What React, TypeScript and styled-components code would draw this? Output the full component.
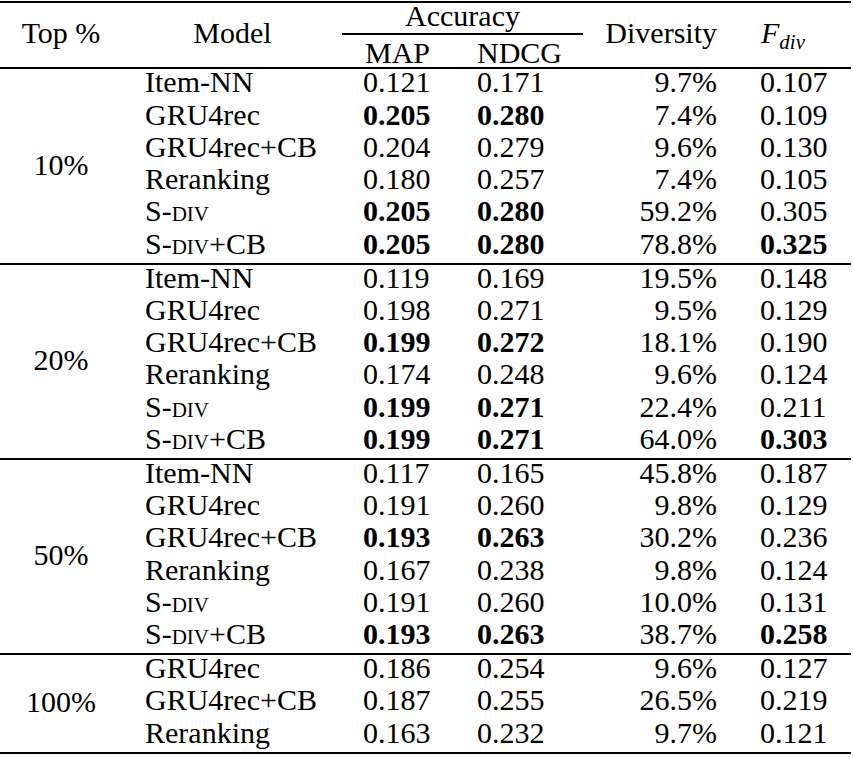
import React from 'react'
import styled, { createGlobalStyle } from 'styled-components'

const serif = '"Liberation Serif", "Times New Roman", Times, serif'

const GlobalStyle = createGlobalStyle`
  html, body {
    margin: 0;
    padding: 0;
    background: #fff;
  }
  body {
    font-family: ${serif};
    color: #000;
  }
`

const Page = styled.div`
  width: 853px;
  height: 759px;
  background: #fff;
  padding-top: 1px;
  box-sizing: border-box;
`

const Table = styled.table`
  width: 851px;
  table-layout: fixed;
  border-collapse: collapse;
  border-top: 2px solid #000;
  border-bottom: 2px solid #000;
  font-family: ${serif};
  font-size: 30px;
  color: #000;
`

const HeadCell = styled.th<{ $align?: 'left' | 'center' | 'right'; $pl?: number; $pr?: number }>`
  font-weight: normal;
  text-align: ${(p) => p.$align || 'left'};
  padding: 0 ${(p) => p.$pr || 0}px 6px ${(p) => p.$pl || 0}px;
  line-height: 29.2px;
  vertical-align: middle;
  white-space: nowrap;
`

const GroupHead = styled.th`
  font-weight: normal;
  text-align: center;
  line-height: 26px;
  padding: 0 0 4px;
  border-bottom: 2px solid #000;
`

const SubHead = styled.th<{ $pl: number }>`
  font-weight: normal;
  text-align: left;
  line-height: 29.2px;
  padding: 2.6px 0 0.7px ${(p) => p.$pl}px;
`

const HeadRow = styled.tr`
  &:last-child {
    border-bottom: 2px solid #000;
  }
`

const BodyRow = styled.tr<{ $end?: boolean }>`
  border-bottom: ${(p) => (p.$end ? '2px solid #000' : 'none')};
`

const Cell = styled.td<{ $align?: 'left' | 'center' | 'right'; $pl?: number; $pr?: number; $bold?: boolean }>`
  text-align: ${(p) => p.$align || 'left'};
  font-weight: ${(p) => (p.$bold ? 'bold' : 'normal')};
  padding: 0 ${(p) => p.$pr || 0}px 6px ${(p) => p.$pl || 0}px;
  line-height: 26.2px;
  white-space: nowrap;
`

const TopCell = styled.td`
  text-align: center;
  vertical-align: middle;
  padding: 0 0 3px;
  line-height: 29.2px;
`

const SmallCaps = styled.span`
  font-variant: small-caps;
`

const Sub = styled.sub`
  font-size: 21px;
  vertical-align: -6px;
  line-height: 0;
`

type Row = {
  model: string
  map: string
  ndcg: string
  div: string
  f: string
  bold?: ('map' | 'ndcg' | 'f')[]
}

type Group = { top: string; rows: Row[] }

const groups: Group[] = [
  {
    top: '10%',
    rows: [
      { model: 'Item-NN', map: '0.121', ndcg: '0.171', div: '9.7%', f: '0.107' },
      { model: 'GRU4rec', map: '0.205', ndcg: '0.280', div: '7.4%', f: '0.109', bold: ['map', 'ndcg'] },
      { model: 'GRU4rec+CB', map: '0.204', ndcg: '0.279', div: '9.6%', f: '0.130' },
      { model: 'Reranking', map: '0.180', ndcg: '0.257', div: '7.4%', f: '0.105' },
      { model: 'S-div', map: '0.205', ndcg: '0.280', div: '59.2%', f: '0.305', bold: ['map', 'ndcg'] },
      { model: 'S-div+CB', map: '0.205', ndcg: '0.280', div: '78.8%', f: '0.325', bold: ['map', 'ndcg', 'f'] },
    ],
  },
  {
    top: '20%',
    rows: [
      { model: 'Item-NN', map: '0.119', ndcg: '0.169', div: '19.5%', f: '0.148' },
      { model: 'GRU4rec', map: '0.198', ndcg: '0.271', div: '9.5%', f: '0.129' },
      { model: 'GRU4rec+CB', map: '0.199', ndcg: '0.272', div: '18.1%', f: '0.190', bold: ['map', 'ndcg'] },
      { model: 'Reranking', map: '0.174', ndcg: '0.248', div: '9.6%', f: '0.124' },
      { model: 'S-div', map: '0.199', ndcg: '0.271', div: '22.4%', f: '0.211', bold: ['map', 'ndcg'] },
      { model: 'S-div+CB', map: '0.199', ndcg: '0.271', div: '64.0%', f: '0.303', bold: ['map', 'ndcg', 'f'] },
    ],
  },
  {
    top: '50%',
    rows: [
      { model: 'Item-NN', map: '0.117', ndcg: '0.165', div: '45.8%', f: '0.187' },
      { model: 'GRU4rec', map: '0.191', ndcg: '0.260', div: '9.8%', f: '0.129' },
      { model: 'GRU4rec+CB', map: '0.193', ndcg: '0.263', div: '30.2%', f: '0.236', bold: ['map', 'ndcg'] },
      { model: 'Reranking', map: '0.167', ndcg: '0.238', div: '9.8%', f: '0.124' },
      { model: 'S-div', map: '0.191', ndcg: '0.260', div: '10.0%', f: '0.131' },
      { model: 'S-div+CB', map: '0.193', ndcg: '0.263', div: '38.7%', f: '0.258', bold: ['map', 'ndcg', 'f'] },
    ],
  },
  {
    top: '100%',
    rows: [
      { model: 'GRU4rec', map: '0.186', ndcg: '0.254', div: '9.6%', f: '0.127' },
      { model: 'GRU4rec+CB', map: '0.187', ndcg: '0.255', div: '26.5%', f: '0.219' },
      { model: 'Reranking', map: '0.163', ndcg: '0.232', div: '9.7%', f: '0.121' },
    ],
  },
]

// "S-div" names get the small-caps treatment like \textsc{div}
const ModelName = ({ name }: { name: string }) => {
  if (!name.startsWith('S-div')) return <>{name}</>
  return (
    <>
      S-<SmallCaps>div</SmallCaps>
      {name.slice(5)}
    </>
  )
}

export default function App() {
  return (
    <Page>
      <GlobalStyle />
      <Table>
        <colgroup>
          <col style={{ width: 122 }} />
          <col style={{ width: 220 }} />
          <col style={{ width: 113 }} />
          <col style={{ width: 128 }} />
          <col style={{ width: 156 }} />
          <col style={{ width: 112 }} />
        </colgroup>
        <thead>
          <HeadRow>
            <HeadCell rowSpan={2} $align="center">
              Top %
            </HeadCell>
            <HeadCell rowSpan={2} $align="center" $pl={23} $pr={22}>
              Model
            </HeadCell>
            <GroupHead colSpan={2}>Accuracy</GroupHead>
            <HeadCell rowSpan={2} $align="right" $pr={22}>
              Diversity
            </HeadCell>
            <HeadCell rowSpan={2} $pl={22}>
              <i>
                F<Sub>div</Sub>
              </i>
            </HeadCell>
          </HeadRow>
          <HeadRow>
            <SubHead $pl={23}>MAP</SubHead>
            <SubHead $pl={22}>NDCG</SubHead>
          </HeadRow>
        </thead>
        <tbody>
          {groups.map((g) =>
            g.rows.map((r, i) => {
              const b = r.bold || []
              return (
                <BodyRow key={g.top + r.model} $end={i === g.rows.length - 1}>
                  {i === 0 && <TopCell rowSpan={g.rows.length}>{g.top}</TopCell>}
                  <Cell $pl={23}>
                    <ModelName name={r.model} />
                  </Cell>
                  <Cell $pl={21} $bold={b.includes('map')}>
                    {r.map}
                  </Cell>
                  <Cell $pl={22} $bold={b.includes('ndcg')}>
                    {r.ndcg}
                  </Cell>
                  <Cell $align="right" $pr={22}>
                    {r.div}
                  </Cell>
                  <Cell $pl={21} $bold={b.includes('f')}>
                    {r.f}
                  </Cell>
                </BodyRow>
              )
            })
          )}
        </tbody>
      </Table>
    </Page>
  )
}
